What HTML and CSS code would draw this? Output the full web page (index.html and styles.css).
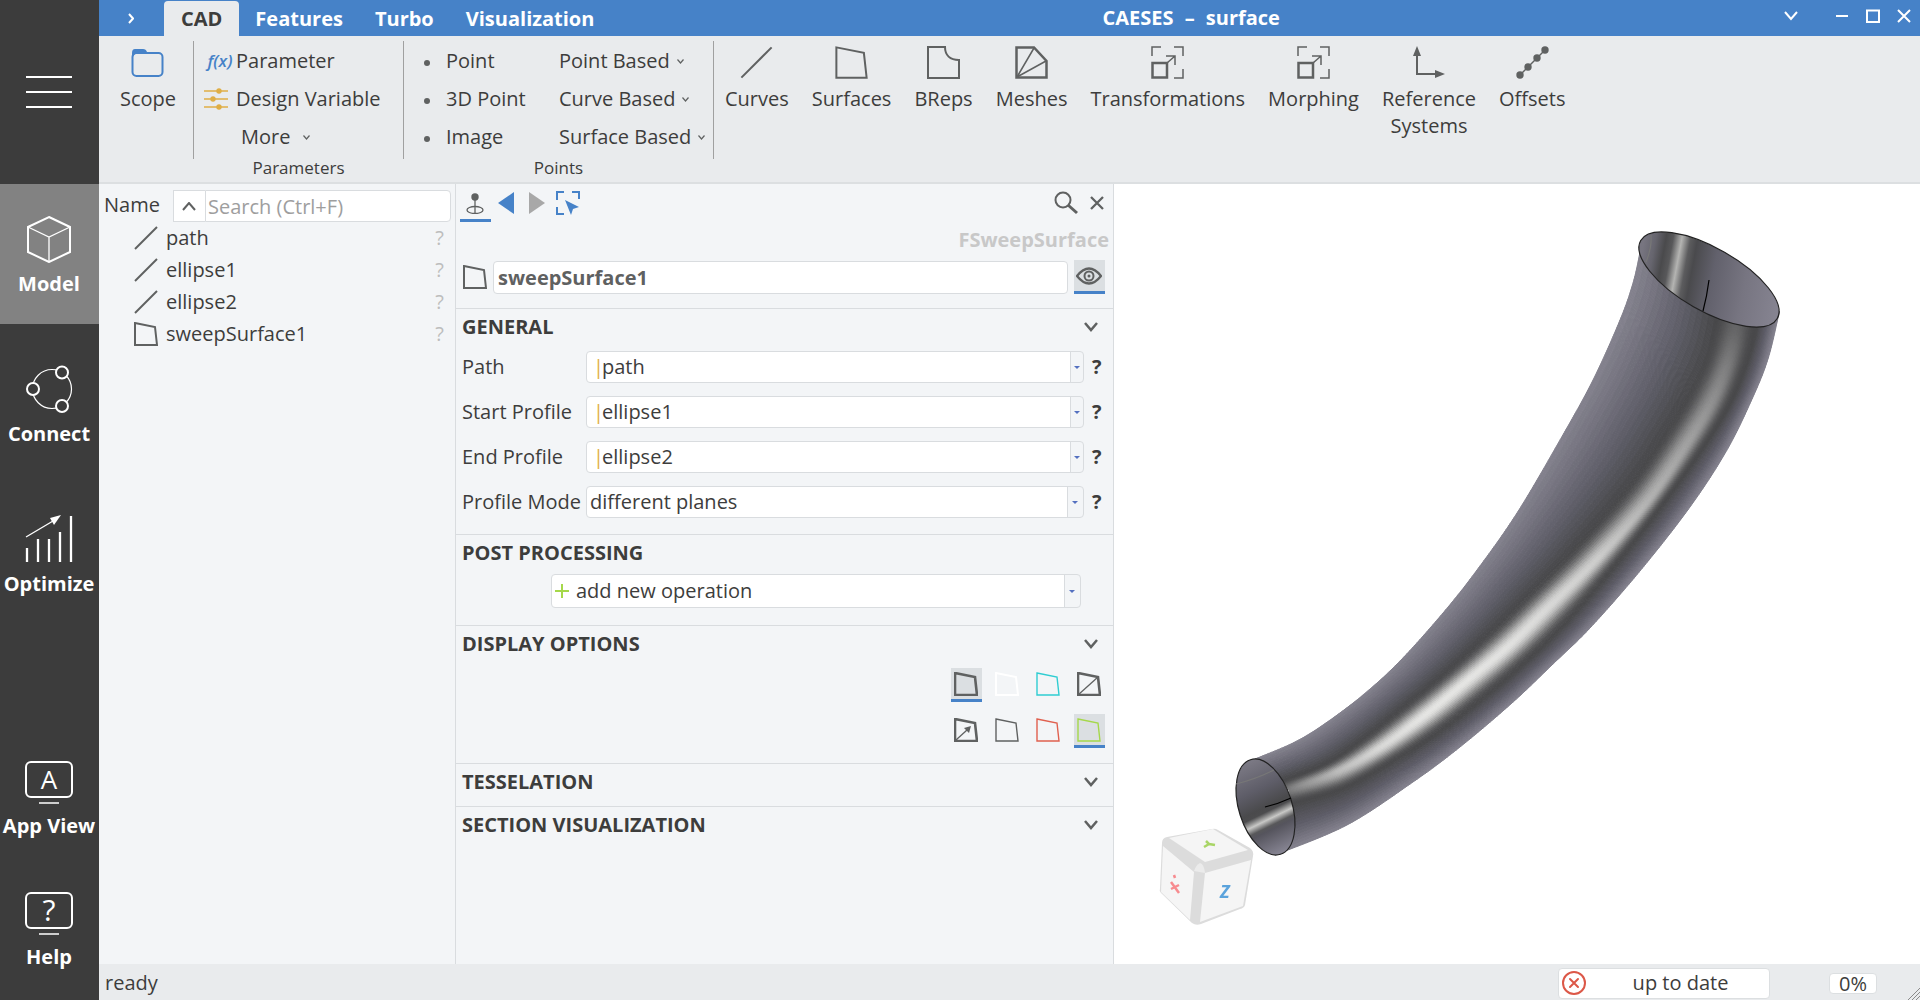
FILE: index.html
```
<!DOCTYPE html>
<html lang="en">
<head>
  <meta charset="UTF-8">
  <title>CAESES – surface</title>
  <link rel="stylesheet" href="styles.css">
</head>
<body>
  <!-- shared icon shapes -->
  <svg class="defs" aria-hidden="true">
    <symbol id="i-line" viewBox="0 0 24 24"><path d="M1 23L23 1"/></symbol>
    <symbol id="i-surface" viewBox="0 0 24 24"><path d="M1 1L21 5L23 23H1Z"/></symbol>
    <symbol id="i-scale" viewBox="0 0 33 33">
      <path stroke-width="1.5" d="M1 10V1H10M23 1H32V10M32 23V32H23M16 17L24 10M15 10H24V19"/>
      <path stroke-width="2.5" d="M1.5 17H16V31.5H1.5Z"/>
    </symbol>
    <symbol id="i-down" viewBox="0 0 14 10"><path d="M1 1L7 8L13 1"/></symbol>
  </svg>

  <div class="app">
    <nav class="sidebar">
      <button class="menu" aria-label="Menu">
        <svg width="48" height="34" viewBox="0 0 48 34"><path stroke-width="2" d="M1 2H47M1 17H47M1 32H47"/></svg>
      </button>
      <button class="nav-item active">
        <svg width="48" height="48" viewBox="0 0 48 48">
          <path stroke-width="2" d="M24 2L45 12V37L24 47L3 37V12Z"/>
          <path stroke-width="1.3" d="M3 12L24 22L45 12M24 22V47"/>
        </svg>
        Model
      </button>
      <button class="nav-item">
        <svg width="48" height="48" viewBox="0 0 48 48">
          <circle stroke-width="1.2" cx="27" cy="24" r="19.5"/>
          <g class="knob" stroke-width="2"><circle cx="8" cy="24" r="6"/><circle cx="37" cy="7.5" r="6"/><circle cx="37" cy="41" r="6"/></g>
        </svg>
        Connect
      </button>
      <button class="nav-item">
        <svg width="48" height="48" viewBox="0 0 48 48">
          <path stroke-width="2.3" d="M2 33V47M13 24V47M24 24V47M35 17V47M46 1V47"/>
          <path stroke-width="1.3" d="M1 22L28 6"/>
          <path class="solid" d="M36 0L25 3L29 10Z"/>
        </svg>
        Optimize
      </button>
      <div class="spacer"></div>
      <button class="nav-item low">
        <svg width="48" height="44" viewBox="0 0 48 44">
          <rect stroke-width="2" x="1" y="1" width="46" height="35" rx="5"/>
          <path stroke-width="1.5" d="M14 42H34"/>
          <text x="24" y="28">A</text>
        </svg>
        App View
      </button>
      <button class="nav-item low">
        <svg width="48" height="44" viewBox="0 0 48 44">
          <rect stroke-width="2" x="1" y="1" width="46" height="35" rx="5"/>
          <path stroke-width="1.5" d="M14 42H34"/>
          <text class="big" x="24" y="29">?</text>
        </svg>
        Help
      </button>
    </nav>

    <div class="main">
      <header class="titlebar">
        <button class="expand" aria-label="Expand"><svg width="6" height="11" viewBox="0 0 6 11"><path d="M1 1L5 5.5L1 10"/></svg></button>
        <button class="tab active">CAD</button>
        <button class="tab">Features</button>
        <button class="tab">Turbo</button>
        <button class="tab">Visualization</button>
        <h1>CAESES <span>–</span> surface</h1>
        <div class="window-buttons">
          <button aria-label="Options"><svg width="14" height="10"><use href="#i-down"/></svg></button>
          <button aria-label="Minimize"><svg width="14" height="14" viewBox="0 0 14 14"><path d="M1 7H13"/></svg></button>
          <button aria-label="Maximize"><svg width="14" height="14" viewBox="0 0 14 14"><path d="M1 1.5H13V13H1Z"/></svg></button>
          <button aria-label="Close"><svg width="14" height="14" viewBox="0 0 14 14"><path d="M1 1L13 13M13 1L1 13"/></svg></button>
        </div>
      </header>

      <div class="ribbon">
        <div class="group scope">
          <button class="tool">
            <svg class="blue" width="33" height="33" viewBox="0 0 33 33">
              <rect stroke-width="2" x="1.5" y="7" width="30" height="23" rx="4"/>
              <path class="solid" d="M1 12V7Q1 3 4 3H12Q15 3 16 6L17 8H4Z"/>
            </svg>
            Scope
          </button>
        </div>
        <div class="group params">
          <button><span class="fx">f(x)</span>Parameter</button>
          <button>
            <svg class="sliders" width="24" height="22" viewBox="0 0 24 22"><path d="M0 3H24M0 11H24M0 19H24"/><g class="solid"><circle cx="15" cy="3" r="2.7"/><circle cx="9" cy="11" r="2.7"/><circle cx="15" cy="19" r="2.7"/></g></svg>Design Variable
          </button>
          <button class="more">More<svg class="tiny" width="7" height="5"><use href="#i-down"/></svg></button>
          <div class="caption">Parameters</div>
        </div>
        <div class="group points">
          <div class="columns">
            <div class="col dots">
              <button><i></i>Point</button>
              <button><i></i>3D Point</button>
              <button><i></i>Image</button>
            </div>
            <div class="col">
              <button>Point Based<svg class="tiny" width="7" height="5"><use href="#i-down"/></svg></button>
              <button>Curve Based<svg class="tiny" width="7" height="5"><use href="#i-down"/></svg></button>
              <button>Surface Based<svg class="tiny" width="7" height="5"><use href="#i-down"/></svg></button>
            </div>
          </div>
          <div class="caption">Points</div>
        </div>
        <div class="tools">
          <button class="tool"><svg width="33" height="33"><use href="#i-line"/></svg>Curves</button>
          <button class="tool"><svg width="33" height="33"><use href="#i-surface"/></svg>Surfaces</button>
          <button class="tool"><svg width="33" height="33" viewBox="0 0 33 33"><path d="M1 1H18C18 9 23 14 32 14V32H1Z"/></svg>BReps</button>
          <button class="tool"><svg width="33" height="33" viewBox="0 0 33 33"><path stroke-width="2.5" d="M1.5 1.5H19L31.5 15V31.5H1.5Z"/><path stroke-width="1.5" d="M2 31L19 2M2 31L31 15"/></svg>Meshes</button>
          <button class="tool"><svg width="33" height="33"><use href="#i-scale"/></svg>Transformations</button>
          <button class="tool"><svg width="33" height="33"><use href="#i-scale"/></svg>Morphing</button>
          <button class="tool"><svg width="33" height="33" viewBox="0 0 33 33"><path d="M5 8V28H24"/><path class="solid" d="M5 0L9 10H1ZM33 28L23 32V24Z"/></svg>Reference<br>Systems</button>
          <button class="tool"><svg width="33" height="33" viewBox="0 0 33 33"><path stroke-width="1.5" d="M4 29L29 4"/><g class="solid"><circle cx="4" cy="29" r="3.7"/><circle cx="12" cy="21" r="3.7"/><circle cx="21" cy="12" r="3.7"/><circle cx="29" cy="4" r="3.7"/></g></svg>Offsets</button>
        </div>
      </div>

      <div class="workspace">
        <section class="tree">
          <div class="tree-head">
            <span class="name">Name</span>
            <button aria-label="Collapse"><svg width="14" height="9" viewBox="0 0 14 9"><path d="M1 8L7 1L13 8"/></svg></button>
            <input type="search" aria-label="Search" placeholder="Search (Ctrl+F)">
          </div>
          <ul>
            <li><svg width="24" height="24"><use href="#i-line"/></svg>path<span>?</span></li>
            <li><svg width="24" height="24"><use href="#i-line"/></svg>ellipse1<span>?</span></li>
            <li><svg width="24" height="24"><use href="#i-line"/></svg>ellipse2<span>?</span></li>
            <li><svg width="24" height="24"><use href="#i-surface"/></svg>sweepSurface1<span>?</span></li>
          </ul>
        </section>

        <section class="props">
          <div class="props-bar">
            <button class="toggle line" aria-label="Manipulate"><svg width="24" height="24" viewBox="0 0 24 24"><ellipse stroke-width="1.3" cx="12" cy="20" rx="8" ry="3.5"/><path stroke-width="1.3" d="M12 7V23"/><circle class="solid" cx="12" cy="7" r="3.7"/></svg></button>
            <button aria-label="Back"><svg class="blue" width="24" height="24" viewBox="0 0 24 24"><path class="solid" d="M20 1V23L4 12Z"/></svg></button>
            <button aria-label="Forward"><svg class="grey" width="24" height="24" viewBox="0 0 24 24"><path class="solid" d="M4 1V23L20 12Z"/></svg></button>
            <button aria-label="Pick"><svg class="blue" width="24" height="24" viewBox="0 0 24 24"><path d="M1 9V1H8M16 1H23V8M1 16V23H8"/><path class="solid" d="M9 9L23 16L17 18L15 24Z"/></svg></button>
            <button class="push" aria-label="Find"><svg width="24" height="24" viewBox="0 0 24 24"><circle cx="9" cy="9" r="7.5"/><path stroke-width="3" d="M14 14L23 22"/></svg></button>
            <button aria-label="Close panel"><svg width="14" height="14" viewBox="0 0 14 14"><path stroke-width="2.3" d="M1 1L13 13M13 1L1 13"/></svg></button>
          </div>
          <div class="type">FSweepSurface</div>
          <div class="object">
            <svg width="24" height="24"><use href="#i-surface"/></svg>
            <input type="text" aria-label="Object name" value="sweepSurface1">
            <button class="toggle on" aria-label="Visible"><svg width="26" height="18" viewBox="0 0 26 18"><path stroke-width="2.3" d="M1 9Q13-6 25 9Q13 24 1 9Z"/><circle cx="13" cy="9" r="4.5"/><circle class="solid" cx="13" cy="9" r="1.5"/></svg></button>
          </div>

          <div class="block general">
            <h2>GENERAL<button aria-label="Fold general"><svg width="14" height="10"><use href="#i-down"/></svg></button></h2>
            <div class="field">
              <label for="f-path">Path</label>
              <div class="combo"><b>|</b><select id="f-path"><option>path</option></select></div>
              <button class="help">?</button>
            </div>
            <div class="field">
              <label for="f-start">Start Profile</label>
              <div class="combo"><b>|</b><select id="f-start"><option>ellipse1</option></select></div>
              <button class="help">?</button>
            </div>
            <div class="field">
              <label for="f-end">End Profile</label>
              <div class="combo"><b>|</b><select id="f-end"><option>ellipse2</option></select></div>
              <button class="help">?</button>
            </div>
            <div class="field">
              <label for="f-mode">Profile Mode</label>
              <div class="combo wide"><select id="f-mode"><option>different planes</option></select></div>
              <button class="help">?</button>
            </div>
          </div>

          <div class="block">
            <h2>POST PROCESSING</h2>
            <div class="combo wide operation">
              <svg width="14" height="14" viewBox="0 0 14 14"><path d="M7 0V14M0 7H14"/></svg>
              <select aria-label="Post processing operation"><option>add new operation</option></select>
            </div>
          </div>

          <div class="block display">
            <h2>DISPLAY OPTIONS<button aria-label="Fold display options"><svg width="14" height="10"><use href="#i-down"/></svg></button></h2>
            <div class="swatches">
              <button class="toggle on" aria-label="Shaded"><svg class="thick" width="24" height="24"><use href="#i-surface"/></svg></button>
              <button class="toggle" aria-label="White"><svg class="white" width="24" height="24"><use href="#i-surface"/></svg></button>
              <button class="toggle" aria-label="Cyan"><svg class="cyan thin" width="24" height="24"><use href="#i-surface"/></svg></button>
              <button class="toggle" aria-label="Mesh"><svg class="thick" width="24" height="24" viewBox="0 0 24 24"><path d="M1 1L21 5L23 23H1Z"/><path stroke-width="1.3" d="M1 23L21 5"/></svg></button>
              <button class="toggle" aria-label="Normals"><svg class="thick" width="24" height="24" viewBox="0 0 24 24"><path d="M1 1L21 5L23 23H1Z"/><path stroke-width="1.3" d="M2 22L13 12"/><path class="solid" d="M17 8L15 15L10 10Z"/></svg></button>
              <button class="toggle" aria-label="Outline"><svg class="thin" width="24" height="24"><use href="#i-surface"/></svg></button>
              <button class="toggle" aria-label="Red"><svg class="red thin" width="24" height="24"><use href="#i-surface"/></svg></button>
              <button class="toggle on" aria-label="Green"><svg class="green thin" width="24" height="24"><use href="#i-surface"/></svg></button>
            </div>
          </div>

          <div class="block">
            <h2>TESSELATION<button aria-label="Fold tesselation"><svg width="14" height="10"><use href="#i-down"/></svg></button></h2>
          </div>
          <div class="block">
            <h2>SECTION VISUALIZATION<button aria-label="Fold section visualization"><svg width="14" height="10"><use href="#i-down"/></svg></button></h2>
          </div>
        </section>

        <section class="view">
          <canvas id="view3d"></canvas>
          <svg class="cube" width="96" height="98" viewBox="0 0 96 98">
            <path fill="#dcdcdc" d="M3 15Q3 10 8 9L53 1Q56 0 59 2L91 20Q95 23 94 28L86 77Q85 80 81 81L42 96Q37 98 33 95L2 65Q0 63 1 60Z"/>
            <path fill="#f5f5f5" d="M10 10L54 1L89 22L46 34Z"/>
            <path fill="#f5f5f5" d="M4 18L35 44L31 92L2 64Z"/>
            <path fill="#f5f5f5" d="M46 45L92 32L84 78L41 94Z"/>
            <path fill="#ebebeb" d="M41 35Q45 36 46 45L35 43Q37 37 41 35Z"/>
            <path stroke="#a9d566" stroke-width="2.5" d="M45 19L50 16L47 13M50 16L56 17"/>
            <path stroke="#f78b8f" stroke-width="2.5" d="M12 54L20 65M20 57L12 61M15 47L16 50"/>
            <text class="z" x="61" y="70">Z</text>
          </svg>
        </section>
      </div>

      <footer class="status">
        <span>ready</span>
        <div class="state">
          <svg width="24" height="24" viewBox="0 0 24 24"><circle cx="12" cy="12" r="11"/><path d="M8 8L16 16M16 8L8 16" stroke-linecap="round"/></svg>
          <span>up to date</span>
        </div>
        <div class="percent">0%</div>
        <svg class="grip" width="12" height="12" viewBox="0 0 12 12"><path d="M0 12L12 0M4 12L12 4M8 12L12 8"/></svg>
      </footer>
    </div>
  </div>
  <script src="view.js"></script>
</body>
</html>
```
FILE: styles.css
```
* {
  box-sizing: border-box;
}
body {
  margin: 0;
  font-family: "Open Sans", "Noto Sans", sans-serif;
  font-size: 20px;
  line-height: 28px;
  color: #3d3d3c;
}
button, input, select {
  font: inherit;
  color: inherit;
  margin: 0;
}
button {
  display: flex;
  align-items: center;
  padding: 0;
  border: none;
  background: none;
  white-space: nowrap;
}
h1, h2, ul {
  margin: 0;
  padding: 0;
  font-size: 20px;
}
svg {
  flex: none;
  fill: none;
  stroke: #5f6161;
  stroke-width: 2;
}
symbol path {
  vector-effect: non-scaling-stroke;
}
.solid {
  fill: #5f6161;
  stroke: none;
}
.defs {
  position: absolute;
  width: 0;
  height: 0;
}
.blue { stroke: #4682c8; }
.blue .solid { fill: #4682c8; }
.grey .solid { fill: #a8a8a8; }
.white { stroke: #fff; }
.cyan { stroke: #2fcdd2; }
.red { stroke: #e0604f; }
.green { stroke: #a5d84a; }
.thin { stroke-width: 1.4; }
.thick { stroke-width: 2.6; }

.app {
  display: flex;
  min-height: 100vh;
}
.main {
  flex: 1;
  min-width: 0;
  display: flex;
  flex-direction: column;
}

/* left navigation */
.sidebar {
  width: 99px;
  flex: none;
  display: flex;
  flex-direction: column;
  background: #3c3c3c;
}
.sidebar button {
  padding-right: 1px;
}
.sidebar svg {
  stroke: #fff;
}
.sidebar .solid {
  fill: #fff;
}
.menu {
  height: 184px;
  justify-content: center;
}
.nav-item {
  height: 140px;
  margin-bottom: 10px;
  padding-top: 31px;
  flex-direction: column;
  gap: 7px;
  color: #fff;
  font-weight: bold;
}
.nav-item.active {
  background: #828282;
}
.nav-item.low {
  height: 131px;
  margin-bottom: 0;
}
.nav-item.low:last-child {
  height: 139px;
}
.nav-item text {
  fill: #fff;
  stroke: none;
  font-size: 26px;
  font-weight: 500;
  text-anchor: middle;
}
.nav-item text.big {
  font-size: 30px;
}
.knob {
  fill: #3c3c3c;
}
.spacer {
  flex: 1;
}

/* title bar */
.titlebar {
  display: flex;
  height: 36px;
  background: #4682c8;
  color: #fff;
}
.titlebar svg {
  stroke: #fff;
}
.titlebar h1 {
  flex: 1;
  align-self: center;
  padding-right: 4px;
  text-align: center;
}
.titlebar h1 span {
  padding: 0 6px;
}
.expand {
  width: 65px;
  padding-right: 2px;
  justify-content: center;
}
.tab {
  margin-top: 1px;
  padding: 1px 16px 0;
  border-radius: 4px 4px 0 0;
  font-weight: bold;
}
.tab.active {
  padding: 1px 17px 0;
  background: #e9ebed;
  color: #3d3d3c;
}
.window-buttons {
  width: 144px;
  display: flex;
  align-items: center;
  justify-content: flex-end;
  gap: 17px;
  padding: 0 9px 4px 0;
}
.window-buttons button:first-child {
  margin-right: 20px;
}

/* ribbon */
.ribbon {
  display: flex;
  height: 148px;
  padding-top: 5px;
  background: #e9ebed;
  border-bottom: 2px solid #dcdfe1;
}
.group {
  border-right: 1px solid #a0a0a0;
  height: 118px;
}
.scope {
  width: 95px;
  display: flex;
  justify-content: center;
  padding-left: 4px;
}
.tool {
  flex-direction: column;
  align-self: flex-start;
  padding-top: 5px;
  gap: 6px;
  line-height: 27px;
}
.params {
  width: 210px;
}
.params button, .col button {
  height: 38px;
  padding-top: 2px;
}
.params button {
  padding-left: 10px;
}
.params .more {
  padding-left: 47px;
}
.more .tiny {
  margin-left: 13px;
}
.fx {
  width: 32px;
  color: #4682c8;
  font-style: italic;
  font-weight: 600;
  font-size: 17px;
}
.sliders {
  margin-right: 8px;
  stroke: #dfae45;
  stroke-width: 1.5;
}
.sliders .solid {
  fill: #dfae45;
}
.tiny {
  margin-left: 7px;
  stroke-width: 1.2;
}
.caption {
  height: 26px;
  font-size: 17px;
  line-height: 26px;
  text-align: center;
}
.points {
  width: 310px;
}
.columns {
  display: flex;
}
.dots {
  width: 155px;
}
.dots i {
  width: 6px;
  height: 6px;
  margin: 3px 16px 0 20px;
  border-radius: 50%;
  background: #5f6161;
}
.tools {
  display: flex;
  gap: 23px;
  padding-left: 11px;
}

.workspace {
  flex: 1;
  display: flex;
  background: #f3f5f7;
}

/* object tree */
.tree {
  width: 357px;
  flex: none;
  border-right: 1px solid #d9dcdf;
}
.tree-head {
  display: flex;
  align-items: center;
  padding: 6px 4px 0 0;
}
.name {
  width: 74px;
  padding: 0 0 2px 5px;
}
.tree-head button {
  width: 32px;
  height: 32px;
  padding-right: 2px;
  justify-content: center;
  background: #fff;
  border: 1px solid #d9dcdf;
  border-right: none;
}
.tree-head input {
  flex: 1;
  min-width: 0;
  height: 32px;
  padding: 0 2px;
  border: 1px solid #d9dcdf;
  border-radius: 0 4px 4px 0;
  background: #fff;
}
.tree-head input::placeholder {
  color: #9e9e9e;
}
.tree li {
  display: flex;
  align-items: center;
  gap: 8px;
  height: 32px;
  padding: 0 11px 0 35px;
}
.tree li span {
  margin-left: auto;
  color: #bdbdbd;
}

/* property editor */
.props {
  width: 658px;
  flex: none;
  border-right: 1px solid #d9dcdf;
}
.props-bar {
  display: flex;
  align-items: center;
  height: 38px;
  padding: 0 9px 0 4px;
}
.props-bar button {
  height: 38px;
  margin-right: 7px;
}
.props-bar .toggle {
  margin-right: 3px;
}
.props-bar .push {
  margin-left: auto;
  margin-right: 12px;
}
.props-bar button:last-child {
  margin-right: 0;
}
.toggle {
  width: 31px;
  height: 34px;
  padding-right: 1px;
  justify-content: center;
  border-bottom: 3px solid transparent;
}
.toggle.line, .toggle.on {
  border-color: #4682c8;
}
.toggle.on {
  background: #dbdfe2;
}
.type {
  padding: 4px 4px 6px 0;
  text-align: right;
  font-weight: bold;
  color: #c8c8c8;
}
.object {
  display: flex;
  align-items: center;
  gap: 6px;
  padding: 0 8px 14px 7px;
}
.object input {
  flex: 1;
  height: 33px;
  padding: 0 4px;
  border: 1px solid #d9dcdf;
  border-radius: 4px;
  background: #fff;
  font-weight: bold;
  color: #5f6161;
}
.block {
  border-top: 1px solid #d9dcdf;
  padding-bottom: 3px;
}
.block h2 {
  display: flex;
  justify-content: space-between;
  padding: 4px 15px 7px 6px;
}
.block h2 svg {
  stroke-width: 2.5;
}
.general {
  padding-bottom: 6px;
}
.field {
  display: flex;
  align-items: center;
  padding: 3px 10px 10px 6px;
}
.field label {
  width: 124px;
}
.combo {
  position: relative;
  flex: 1;
  display: flex;
  align-items: center;
  height: 32px;
  padding-left: 6px;
  border: 1px solid #d9dcdf;
  border-radius: 4px;
  background: linear-gradient(to left, #f3f5f7 12px, #d9dcdf 12px, #d9dcdf 13px, #fff 13px);
}
.combo.wide {
  padding-left: 3px;
  background: linear-gradient(to left, #f3f5f7 15px, #d9dcdf 15px, #d9dcdf 16px, #fff 16px);
}
.combo::after {
  content: "";
  position: absolute;
  right: 3px;
  border: 3px solid transparent;
  border-top: 3px solid #5470c0;
  border-bottom: none;
}
.combo.wide::after {
  right: 5px;
}
.combo b {
  width: 9px;
  font-weight: normal;
  color: #dfae45;
}
.combo select {
  flex: 1;
  height: 30px;
  padding: 0;
  border: none;
  background: none;
  appearance: none;
}
.help {
  width: 11px;
  margin-left: 8px;
  font-weight: bold;
}
.combo.operation {
  height: 34px;
  margin: 0 32px 14px 95px;
}
.operation svg {
  margin-right: 7px;
  stroke: #a5d84a;
}
.display {
  padding-bottom: 15px;
}
.swatches {
  display: grid;
  grid-template-columns: repeat(4, 31px);
  justify-content: end;
  gap: 12px 10px;
  padding: 3px 8px 0 0;
}

/* 3D view */
.view {
  position: relative;
  flex: 1;
  min-width: 0;
  background: #fff;
}
.view canvas {
  position: absolute;
  width: 100%;
  height: 100%;
}
.cube {
  position: absolute;
  left: 45px;
  bottom: 38px;
  stroke: none;
}
.z {
  fill: #5ba3dc;
  font-size: 18px;
  font-weight: bold;
  font-style: italic;
}

/* status bar */
.status {
  position: relative;
  display: flex;
  align-items: center;
  height: 36px;
  padding: 2px 43px 0 6px;
  background: #e9ebed;
}
.state {
  display: flex;
  align-items: center;
  width: 212px;
  height: 31px;
  margin-left: auto;
  padding-left: 3px;
  border: 1px solid #dcdfe1;
  border-radius: 4px;
  background: #fff;
}
.state svg {
  stroke: #dc5848;
}
.state span {
  flex: 1;
  padding-left: 6px;
  text-align: center;
}
.percent {
  width: 48px;
  height: 21px;
  margin-left: 59px;
  border: 1px solid #dcdfe1;
  border-radius: 4px;
  background: #fff;
  line-height: 19px;
  text-align: center;
}
.grip {
  position: absolute;
  right: 0;
  bottom: 0;
  stroke: #8a8a8a;
  stroke-width: 1;
}
```
FILE: view.js
```
// Sweep surface as a grid: one row per station along the path,
// columns: left edge, dark band, highlight, dark band, right edge.
const stations = [
  [[1255,759],[1282,780],[1289,790],[1292,805],[1275,855]],
  [[1293,743],[1325,763],[1337,772],[1343,790],[1347,825]],
  [[1323,725],[1363,738],[1380,748],[1392,763],[1413,782]],
  [[1363,695],[1407,703],[1423,717],[1439,733],[1460,747]],
  [[1400,661],[1447,670],[1467,681],[1486,697],[1512,703]],
  [[1443,613],[1490,631],[1508,647],[1528,661],[1553,664]],
  [[1477,570],[1530,592],[1547,609],[1567,623],[1590,628]],
  [[1517,513],[1575,546],[1597,560],[1617,565],[1640,571]],
  [[1560,440],[1630,483],[1648,502],[1666,502],[1690,507]],
  [[1593,380],[1671,423],[1687,445],[1709,441],[1727,450]],
  [[1620,320],[1694,383],[1712,403],[1733,400],[1753,397]],
  [[1633,283],[1707,353],[1726,368],[1749,360],[1768,359]],
  [[1640,252],[1714,322],[1735,333],[1757,328],[1778,318]],
  [[1641,245],[1718,298],[1738,303],[1761,303],[1779,311]]
];
const shine = [0.3, 0.68, 0.85, 0.92, 0.92, 0.9, 0.85, 0.78, 0.62, 0.52, 0.42, 0.32, 0.18, 0.12];
const ORIGIN = [1114, 184];
const edge = [132, 130, 142], mid = [95, 94, 105], dark = [72, 72, 74], light = [242, 242, 240];

function mix(a, b, t) {
  return a.map((v, i) => v + (b[i] - v) * t);
}
function rgb(c) {
  return `rgb(${c.map(Math.round).join(',')})`;
}
function spline(a, b, c, d, t) {
  return 0.5 * (2 * b + (c - a) * t + (2 * a - 5 * b + 4 * c - d) * t * t + (3 * b - a - 3 * c + d) * t * t * t);
}
function rail(col, s) {
  const last = stations.length - 1;
  const i = Math.min(Math.floor(s), last - 1);
  const at = k => stations[Math.max(0, Math.min(last, k))][col];
  return [0, 1].map(n => spline(at(i - 1)[n], at(i)[n], at(i + 1)[n], at(i + 2)[n], s - i));
}
function shade(col, u, s) {
  const i = Math.min(Math.floor(s), shine.length - 2);
  const top = mix(dark, light, shine[i] + (shine[i + 1] - shine[i]) * (s - i));
  const ease = t => Math.pow((1 - Math.cos(Math.PI * t)) / 2, 1.25);
  if (col === 0) return u < 0.6 ? mix(edge, mid, u / 0.6) : mix(mid, dark, (u - 0.6) / 0.4);
  if (col === 1) return mix(dark, top, ease(u));
  if (col === 2) return mix(dark, top, ease(1 - u));
  return u < 0.5 ? mix(dark, mid, u / 0.5) : mix(mid, edge, (u - 0.5) / 0.5);
}

function drawSurface(ctx) {
  const rows = 400, cols = 14, last = stations.length - 1;
  ctx.lineWidth = 1;
  for (let r = 0; r < rows; r++) {
    const s0 = r / rows * last, s1 = (r + 1) / rows * last;
    for (let c = 0; c < 4; c++) {
      const a = rail(c, s0), b = rail(c + 1, s0), d = rail(c, s1), e = rail(c + 1, s1);
      for (let k = 0; k < cols; k++) {
        const u0 = k / cols, u1 = (k + 1) / cols;
        const p = [mix(a, b, u0), mix(a, b, u1), mix(d, e, u1), mix(d, e, u0)];
        ctx.fillStyle = ctx.strokeStyle = rgb(shade(c, (k + 0.5) / cols, s0));
        ctx.beginPath();
        p.forEach(q => ctx.lineTo(q[0], q[1]));
        ctx.closePath();
        ctx.fill();
        ctx.stroke();
      }
    }
  }
}

function drawOpening(ctx, cx, cy, rx, ry, angle, dir, stops) {
  const g = ctx.createLinearGradient(cx - dir[0], cy - dir[1], cx + dir[0], cy + dir[1]);
  stops.forEach(s => g.addColorStop(s[0], s[1]));
  ctx.beginPath();
  ctx.ellipse(cx, cy, rx, ry, angle * Math.PI / 180, 0, Math.PI * 2);
  ctx.fillStyle = g;
  ctx.fill();
  ctx.strokeStyle = '#222';
  ctx.lineWidth = 1.2;
  ctx.stroke();
}

function line(ctx, color, x0, y0, x1, y1, x2, y2) {
  ctx.strokeStyle = color;
  ctx.beginPath();
  ctx.moveTo(x0, y0);
  ctx.quadraticCurveTo(x1, y1, x2, y2);
  ctx.stroke();
}

function draw() {
  const canvas = document.getElementById('view3d');
  canvas.width = canvas.clientWidth;
  canvas.height = canvas.clientHeight;
  const ctx = canvas.getContext('2d');
  const scale = Math.min(canvas.width / 806, canvas.height / 780);
  ctx.scale(scale, scale);
  ctx.translate(-ORIGIN[0], -ORIGIN[1]);
  drawSurface(ctx);
  drawOpening(ctx, 1265.5, 807, 49.6, 26.6, 72.4, [21, 43], [
    [0, '#7b7984'], [0.3, '#5e5d68'], [0.5, '#4a4a4c'], [0.55, '#4c4c4e'],
    [0.63, '#c8c8c6'], [0.7, '#58585a'], [0.74, '#55545d'], [1, '#868492']
  ]);
  line(ctx, '#777', 1236, 784, 1256, 779, 1274, 770);
  line(ctx, '#000', 1265, 807, 1278, 804, 1291, 798);
  drawOpening(ctx, 1709, 279.5, 78.6, 31.4, 29.7, [70, 13], [
    [0, '#777580'], [0.08, '#66656e'], [0.15, '#4a4a4c'], [0.2, '#58585a'], [0.26, '#b4b4b2'],
    [0.32, '#5c5c5e'], [0.37, '#4a4a4d'], [0.52, '#62616c'], [0.75, '#777581'], [1, '#858390']
  ]);
  line(ctx, '#777', 1651, 235, 1652, 248, 1646, 262);
  line(ctx, '#000', 1709, 280, 1707, 296, 1703, 311);
}

draw();
window.addEventListener('resize', draw);
```
